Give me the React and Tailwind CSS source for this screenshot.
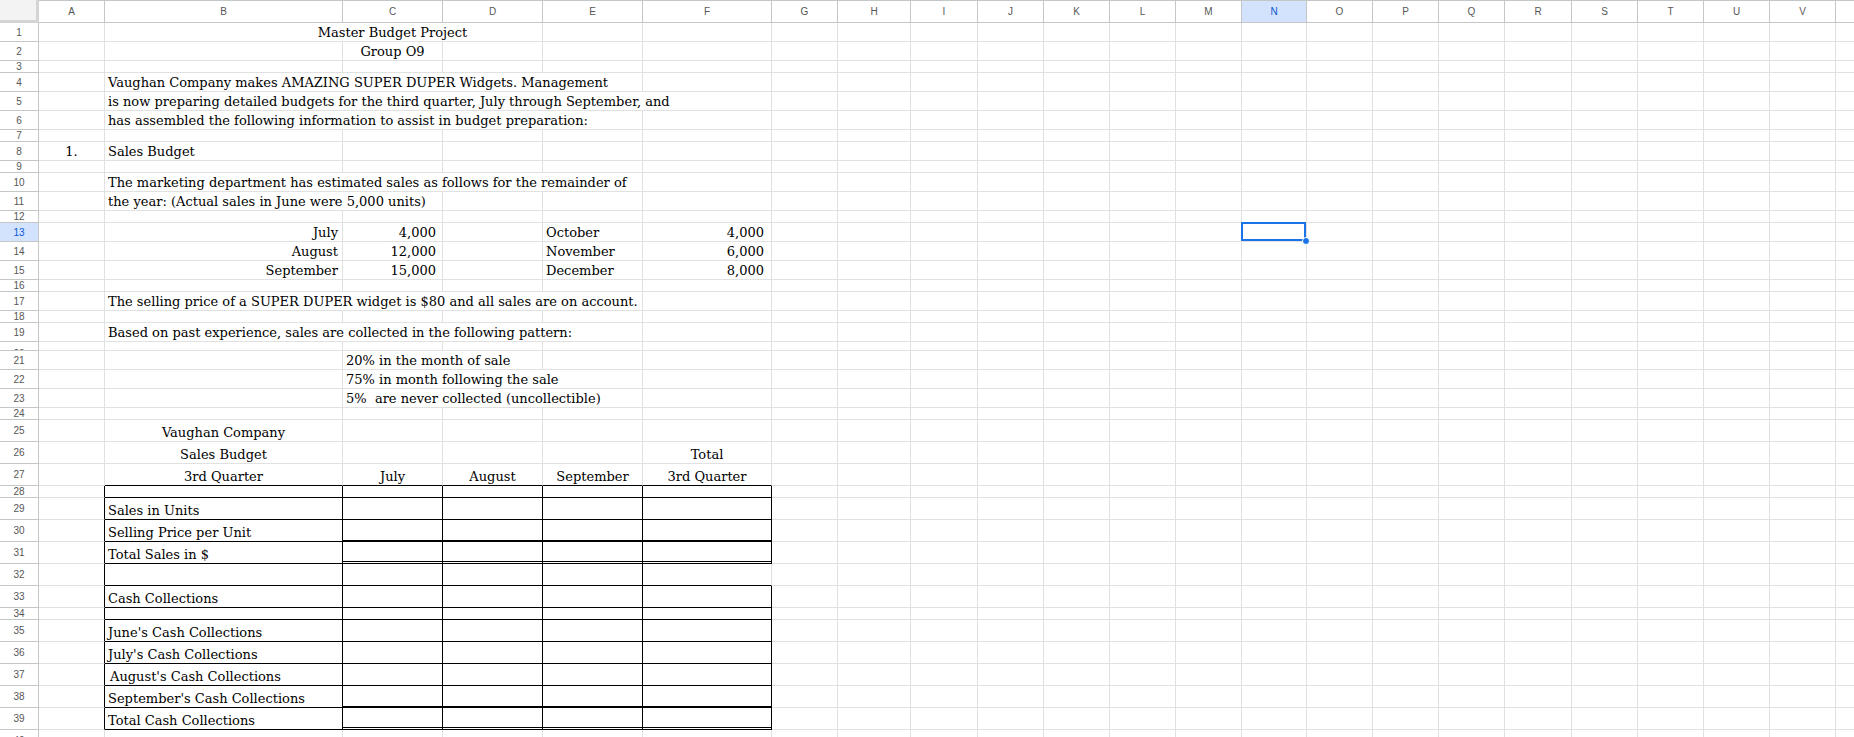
import React from "react";

const LETTERS = "ABCDEFGHIJKLMNOPQRSTUVW".split("");
const ROW_COUNT = 40;
const SELECTED = { row: 13, col: 14 };

// Cell contents keyed by row number; col is 1-based (A = 1)
const CELLS = {
  1: [{ col: 2, span: 3, text: "Master Budget Project", align: "center", pad: "pl-[138px]" }],
  2: [{ col: 3, text: "Group O9", align: "center" }],
  4: [{ col: 2, span: 4, text: "Vaughan Company makes AMAZING SUPER DUPER Widgets. Management" }],
  5: [{ col: 2, span: 5, text: "is now preparing detailed budgets for the third quarter, July through September, and" }],
  6: [{ col: 2, span: 4, text: "has assembled the following information to assist in budget preparation:" }],
  8: [
    { col: 1, text: "1.", align: "center" },
    { col: 2, text: "Sales Budget" },
  ],
  10: [{ col: 2, span: 4, text: "The marketing department has estimated sales as follows for the remainder of" }],
  11: [{ col: 2, span: 2, text: "the year: (Actual sales in June were 5,000 units)" }],
  13: [
    { col: 2, text: "July", align: "right" },
    { col: 3, text: "4,000", align: "right", pad: "pr-[6px]" },
    { col: 5, text: "October" },
    { col: 6, text: "4,000", align: "right", pad: "pr-[7px]" },
  ],
  14: [
    { col: 2, text: "August", align: "right" },
    { col: 3, text: "12,000", align: "right", pad: "pr-[6px]" },
    { col: 5, text: "November" },
    { col: 6, text: "6,000", align: "right", pad: "pr-[7px]" },
  ],
  15: [
    { col: 2, text: "September", align: "right" },
    { col: 3, text: "15,000", align: "right", pad: "pr-[6px]" },
    { col: 5, text: "December" },
    { col: 6, text: "8,000", align: "right", pad: "pr-[7px]" },
  ],
  17: [{ col: 2, span: 4, text: "The selling price of a SUPER DUPER widget is $80 and all sales are on account." }],
  19: [{ col: 2, span: 4, text: "Based on past experience, sales are collected in the following pattern:" }],
  21: [{ col: 3, span: 2, text: "20% in the month of sale" }],
  22: [{ col: 3, span: 3, text: "75% in month following the sale" }],
  23: [{ col: 3, span: 3, text: "5%  are never collected (uncollectible)" }],
  25: [{ col: 2, text: "Vaughan Company", align: "center" }],
  26: [
    { col: 2, text: "Sales Budget", align: "center" },
    { col: 6, text: "Total", align: "center" },
  ],
  27: [
    { col: 2, text: "3rd Quarter", align: "center" },
    { col: 3, text: "July", align: "center" },
    { col: 4, text: "August", align: "center" },
    { col: 5, text: "September", align: "center" },
    { col: 6, text: "3rd Quarter", align: "center" },
  ],
  29: [{ col: 2, text: "Sales in Units" }],
  30: [{ col: 2, text: "Selling Price per Unit" }],
  31: [{ col: 2, text: "Total Sales in $" }],
  33: [{ col: 2, text: "Cash Collections" }],
  35: [{ col: 2, text: "June's Cash Collections" }],
  36: [{ col: 2, text: "July's Cash Collections" }],
  37: [{ col: 2, text: "August's Cash Collections", pad: "pl-[5px]" }],
  38: [{ col: 2, text: "September's Cash Collections" }],
  39: [{ col: 2, text: "Total Cash Collections" }],
};

const SPAN = { 1: "", 2: "col-span-2", 3: "col-span-3", 4: "col-span-4", 5: "col-span-5" };
const ALIGN = {
  left: "justify-start pl-[3px]",
  right: "justify-end pr-[4px]",
  center: "justify-center",
};

const inTable = (r, c) => r >= 28 && r <= 39 && c >= 2 && c <= 6;

// gridlines, plus the black box drawn around the sales budget table
function borderCls(r, c, end) {
  let right = "border-r-[#e1e1e1]";
  if (inTable(r, end) && !(r === 32 && end === 6)) right = "border-r-black";
  if (end === 1 && r >= 28 && r <= 39) right = "border-r-black";

  let bottom = "border-b border-b-[#e1e1e1]";
  if (r === 27 && c >= 2 && c <= 6) bottom = "border-b border-b-black";
  if (inTable(r, c)) {
    if ((r === 30 || r === 38) && c >= 3) bottom = "border-b-2 border-b-black";
    else if ((r === 31 || r === 39) && c >= 3) bottom = "border-b-[3px] border-b-black border-double";
    else bottom = "border-b border-b-black";
  }
  return `border-r ${right} ${bottom}`;
}

function ColumnHeaders() {
  return (
    <>
      <div className="bg-[#f3f3f3] border-r-[3px] border-b-[3px] border-[#d4d4d4]" />
      {LETTERS.map((l, i) => {
        const active = i + 1 === SELECTED.col;
        return (
          <div
            key={l}
            className={`flex items-center justify-center border-t border-r border-b border-[#c4c7c5] text-[10px] font-['Liberation_Sans',sans-serif] ${
              active ? "bg-[#d3e3fd] text-[#0b57d0]" : "bg-white text-[#575757]"
            }`}
          >
            {l}
          </div>
        );
      })}
    </>
  );
}

function SheetRow({ r }) {
  const specs = CELLS[r] || [];
  const active = r === SELECTED.row;
  const cells = [];
  let c = 1;
  while (c <= LETTERS.length) {
    const spec = specs.find((s) => s.col === c);
    const span = spec?.span || 1;
    const end = c + span - 1;
    const isSel = r === SELECTED.row && c === SELECTED.col;
    cells.push(
      <div
        key={c}
        className={`relative flex items-end min-w-0 bg-white ${SPAN[span]} ${borderCls(r, c, end)} ${
          spec ? ALIGN[spec.align || "left"] : ""
        } ${spec?.pad || ""}`}
      >
        {spec && (
          <span className="whitespace-pre leading-[16px] text-[13px] text-black font-['DejaVu_Serif',serif]">
            {spec.text}
          </span>
        )}
        {isSel && (
          <>
            <div className="absolute -left-px -top-px right-0 bottom-0 border-2 border-[#1a73e8] z-10" />
            <div className="absolute -right-[4px] -bottom-[4px] w-[8px] h-[8px] rounded-full bg-[#1a73e8] border border-white z-20" />
          </>
        )}
      </div>
    );
    c = end + 1;
  }

  return (
    <>
      <div
        className={`flex justify-center overflow-hidden border-r border-b border-[#c4c7c5] text-[10px] font-['Liberation_Sans',sans-serif] ${
          r === 20 ? "items-start pt-[4px]" : "items-center"
        } ${active ? "bg-[#d3e3fd] text-[#0b57d0]" : "bg-white text-[#575757]"}`}
      >
        {r}
      </div>
      {cells}
    </>
  );
}

export default function App() {
  const rows = Array.from({ length: ROW_COUNT }, (_, i) => i + 1);
  return (
    <div className="h-[737px] w-full overflow-hidden bg-white">
      <div className="grid w-max grid-cols-[39px_66px_238px_100px_100px_100px_129px_66px_73px_67px_66px_66px_66px_66px_65px_66px_66px_66px_67px_66px_66px_66px_66px_66px] grid-rows-[23px_19px_19px_12px_19px_19px_19px_12px_19px_12px_19px_19px_12px_19px_19px_19px_12px_19px_12px_19px_9px_19px_19px_19px_12px_22px_22px_22px_12px_22px_22px_22px_22px_22px_12px_22px_22px_22px_22px_22px_22px]">
        <ColumnHeaders />
        {rows.map((r) => (
          <React.Fragment key={r}>
            <SheetRow r={r} />
          </React.Fragment>
        ))}
      </div>
    </div>
  );
}
